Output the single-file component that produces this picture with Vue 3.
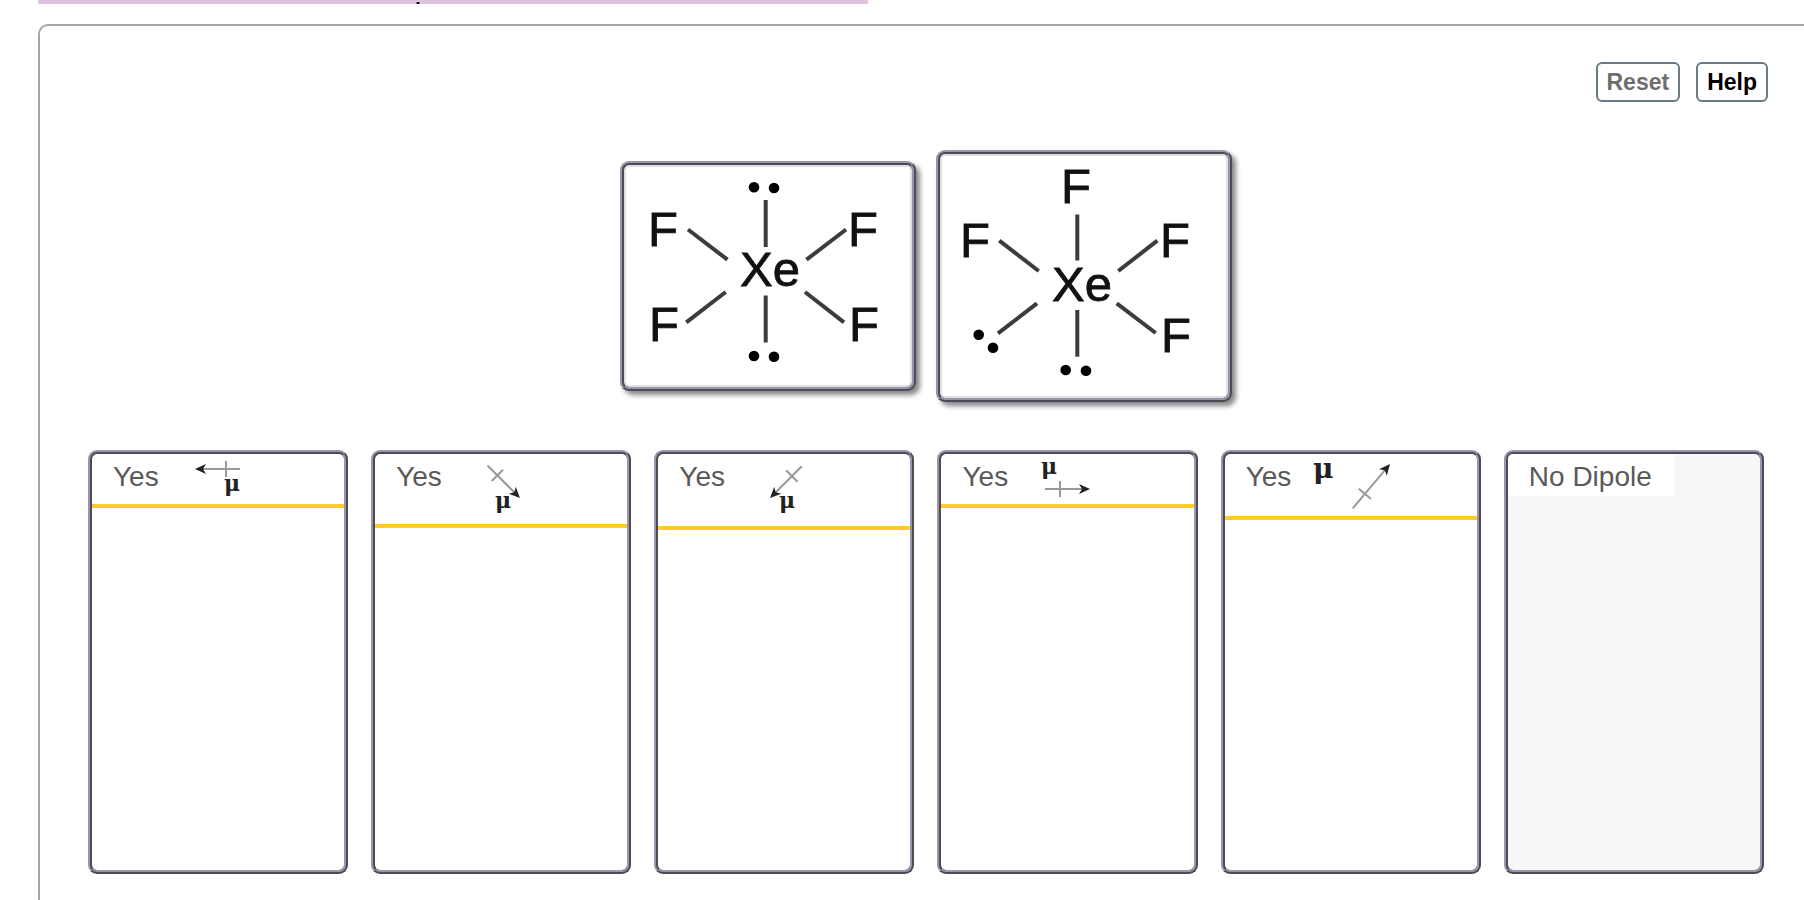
<template>
  <div class="page">
    <p class="highlight">,</p>

    <section class="panel">
      <div class="toolbar">
        <button type="button" class="btn" :disabled="!moved">Reset</button>
        <button type="button" class="btn">Help</button>
      </div>

      <div class="workspace">
        <div class="cards">
          <div v-for="m in molecules" :key="m.id" class="card">
            <svg :width="284" :height="m.height" :viewBox="`0 0 284 ${m.height}`">
              <line v-for="(b, i) in m.bonds" :key="'b' + i" class="bond" :x1="b[0]" :y1="b[1]" :x2="b[2]" :y2="b[3]" />
              <circle v-for="(d, i) in m.dots" :key="'d' + i" :cx="d[0]" :cy="d[1]" r="5.3" />
              <text v-for="(a, i) in m.atoms" :key="'a' + i" class="atom" :x="a[1]" :y="a[2]">{{ a[0] }}</text>
            </svg>
          </div>
        </div>

        <div class="bins">
          <div v-for="bin in bins" :key="bin.id" class="bin" :class="{ plain: !bin.arrow }">
            <div class="head">
              <span class="label">{{ bin.label }}</span>
              <svg v-if="bin.arrow" class="dipole" width="110" :height="bin.height" :viewBox="`0 0 110 ${bin.height}`">
                <g :transform="`translate(${bin.arrow.tip}) rotate(${bin.arrow.angle})`">
                  <path class="shaft" :d="`M-4 0H-${bin.arrow.length}M-${bin.arrow.cross} -8V8`" />
                  <path d="M0 0L-11 -5L-8 0L-11 5Z" />
                </g>
                <text class="mu" :class="{ big: bin.big }" :x="bin.mu[0]" :y="bin.mu[1]">μ</text>
              </svg>
            </div>
          </div>
        </div>
      </div>
    </section>
  </div>
</template>

<script setup>
import { ref } from 'vue';

const moved = ref(false);

const molecules = [
  {
    id: 'square-planar',
    height: 218,
    bonds: [
      [139.7, 33, 139.7, 80],
      [139.7, 128.5, 139.7, 175.5],
      [62, 62.5, 101.5, 92.7],
      [180.5, 92.7, 220, 62.5],
      [99.7, 125, 60.3, 155.3],
      [179, 125, 218, 155.3]
    ],
    dots: [[128, 20.3], [148, 21], [128, 189], [148, 189.7]],
    atoms: [['F', 22, 79], ['F', 222, 79], ['F', 23, 174], ['F', 223, 174], ['Xe', 114, 119]]
  },
  {
    id: 'adjacent-pairs',
    height: 240,
    bonds: [
      [135.3, 58.5, 135.3, 104.5],
      [135.3, 154, 135.3, 200.7],
      [57.3, 84.7, 96.7, 115],
      [176.3, 115, 215.3, 84.7],
      [95, 147.3, 56, 177.3],
      [174.7, 147.3, 213.7, 177]
    ],
    dots: [[36.7, 178.7], [51, 191.7], [123.7, 214], [144, 214.7]],
    atoms: [['F', 119, 47], ['F', 18, 101], ['F', 218, 101], ['F', 219, 196], ['Xe', 110, 145]]
  }
];

// arrows point right before rotation; cross is the distance from the tip
const bins = [
  { id: 1, label: 'Yes', height: 50, arrow: { tip: '28 15', angle: 180, length: 45, cross: 31 }, mu: [57, 37] },
  { id: 2, label: 'Yes', height: 70, arrow: { tip: '70 44', angle: 45, length: 46, cross: 32 }, mu: [45, 54] },
  { id: 3, label: 'Yes', height: 72, arrow: { tip: '37 44', angle: 135, length: 45, cross: 31 }, mu: [46, 54] },
  { id: 4, label: 'Yes', height: 50, arrow: { tip: '74 35', angle: 0, length: 45, cross: 30 }, mu: [25, 20] },
  { id: 5, label: 'Yes', height: 62, big: true, arrow: { tip: '91 10', angle: -50, length: 58, cross: 39 }, mu: [14, 24] },
  { id: 6, label: 'No Dipole' }
];
</script>

<style>
body { background: #fff; overflow: hidden; }
</style>

<style scoped>
.page { min-height: 100vh; display: flex; flex-direction: column; font-family: "Liberation Sans", Arial, sans-serif; }
.highlight {
  width: 46%;
  height: 4px;
  margin: 0 0 20px 38px;
  padding-left: 376px;
  box-sizing: border-box;
  overflow: hidden;
  display: flex;
  align-items: flex-end;
  background: #dfc3dc;
  font-size: 28px;
  line-height: 16px;
}
.panel {
  flex: 1;
  margin-left: 38px;
  padding: 36px 36px 26px 48px;
  border: 2px solid #a6a6a6;
  border-right: 0;
  border-bottom: 0;
  border-top-left-radius: 10px;
}
.toolbar { display: flex; justify-content: flex-end; gap: 16px; }
.btn {
  height: 40px;
  padding: 0 9px;
  border: 2px solid #6a7a82;
  border-radius: 6px;
  background: #fff;
  color: #000;
  font: bold 23px "Liberation Sans", Arial, sans-serif;
}
.btn:disabled { color: #6e6e6e; }
.workspace { padding-right: 4px; }
.cards { display: flex; justify-content: center; align-items: center; gap: 20px; margin: 48px 0; }
.card {
  border: 4px ridge #9896aa;
  border-radius: 9px;
  background: #fff;
  box-shadow: inset 0 0 0 2px #e0e0e0, 4px 4px 5px #888;
}
.card svg { display: block; margin: 2px; }
.bond { stroke: #3c3c3c; stroke-width: 4; }
.atom { font-size: 49px; fill: #111; stroke: #111; stroke-width: 0.8; }
.bins { display: grid; grid-template-columns: repeat(6, minmax(0, 1fr)); gap: 23px; }
.bin { box-sizing: border-box; height: 424px; border: 4px ridge #9896aa; border-radius: 9px; overflow: hidden; }
.head { display: flex; align-items: flex-start; border-bottom: 4px solid #ffcb2b; }
.label { padding: 4px 8px 0 21px; font-size: 28px; line-height: 38px; color: #5a5a5a; }
.dipole { display: block; flex: none; overflow: visible; fill: #222; }
.shaft { stroke: #999; stroke-width: 2; fill: none; }
.mu { font: bold 22px "DejaVu Serif", serif; }
.mu.big { font-size: 28px; }
.plain { background: #f7f7f7; }
.plain .head { border-bottom: 0; }
.plain .label { padding-right: 22px; background: #fff; }
</style>
